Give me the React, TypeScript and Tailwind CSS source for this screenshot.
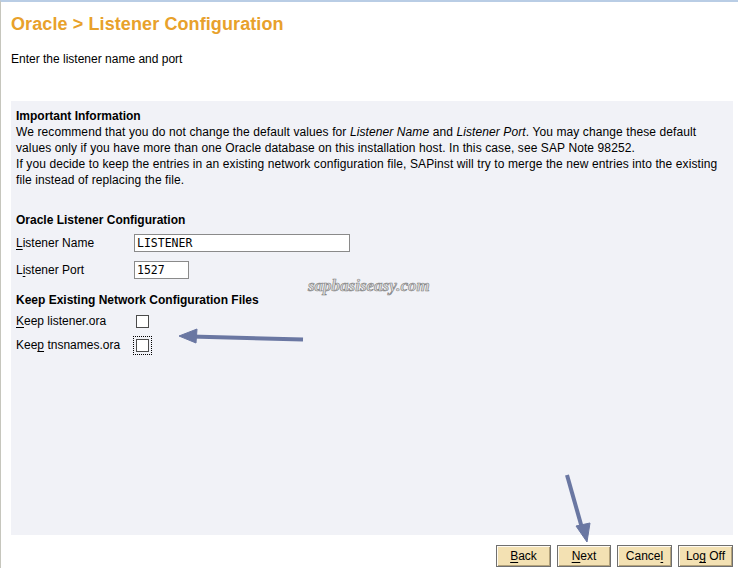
import React from "react";

const Key = ({ text, at }: { text: string; at: number }) => (
  <>
    {text.slice(0, at)}
    <span className="underline underline-offset-2">{text[at]}</span>
    {text.slice(at + 1)}
  </>
);

const SapButton = ({ text, at, w }: { text: string; at: number; w: string }) => (
  <button
    className={`${w} h-[22px] border border-[#6f6f6f] bg-[#f3e1b3] text-[12px] leading-none text-black shadow-[inset_1px_1px_0_#fffaf0,inset_-1px_-1px_0_#b3a27a]`}
  >
    <Key text={text} at={at} />
  </button>
);

const Checkbox = ({ focused }: { focused?: boolean }) => (
  <span
    className={`inline-block h-[13px] w-[13px] border border-[#4b4b4b] bg-white ${
      focused ? "outline outline-1 outline-dotted outline-offset-[2px] outline-black" : ""
    }`}
  />
);

export default function App() {
  return (
    <div className="relative h-[568px] w-[738px] overflow-hidden border-l border-t-2 border-l-[#c6c6bd] border-t-[#b9cde5] bg-white font-['Liberation_Sans',Arial,sans-serif] text-[12px] text-black">
      <div className="pl-[10px] pt-[10px]">
        <h1 className="text-[18px] font-bold leading-[24px] tracking-[0.1px] text-[#e8a12b]">
          Oracle &gt; Listener Configuration
        </h1>
        <p className="mt-[15px] leading-4">Enter the listener name and port</p>
      </div>

      <div className="ml-[10px] mt-[34px] h-[434px] w-[722px] bg-[#f1f2f7] px-[5px] pt-[7px]">
        <div className="whitespace-nowrap leading-4 tracking-[0.1px]">
          <div className="font-bold tracking-normal">Important Information</div>
          <div>
            We recommend that you do not change the default values for <i>Listener Name</i> and{" "}
            <i>Listener Port</i>. You may change these default
          </div>
          <div>
            values only if you have more than one Oracle database on this installation host. In
            this case, see SAP Note 98252.
          </div>
          <div>
            If you decide to keep the entries in an existing network configuration file, SAPinst
            will try to merge the new entries into the existing
          </div>
          <div>file instead of replacing the file.</div>
        </div>

        <div className="mt-[24px] font-bold leading-4">Oracle Listener Configuration</div>
        <div className="mt-[6px] flex h-[18px] items-center">
          <label className="w-[118px]">
            <Key text="Listener Name" at={0} />
          </label>
          <input
            readOnly
            value="LISTENER"
            className="h-[18px] w-[216px] border border-[#8a8a8a] bg-white px-[2px] font-['DejaVu_Sans_Mono',monospace] text-[11.5px] outline-none"
          />
        </div>
        <div className="mt-[9px] flex h-[18px] items-center">
          <label className="w-[118px]">
            <Key text="Listener Port" at={1} />
          </label>
          <input
            readOnly
            value="1527"
            className="h-[18px] w-[55px] border border-[#8a8a8a] bg-white px-[2px] font-['DejaVu_Sans_Mono',monospace] text-[11.5px] outline-none"
          />
        </div>

        <div className="mt-[13px] font-bold leading-4">Keep Existing Network Configuration Files</div>
        <div className="mt-[5px] flex h-4 items-center">
          <label className="w-[120px]">
            <Key text="Keep listener.ora" at={0} />
          </label>
          <Checkbox />
        </div>
        <div className="mt-[8px] flex h-4 items-center">
          <label className="w-[120px]">
            <Key text="Keep tnsnames.ora" at={3} />
          </label>
          <Checkbox focused />
        </div>
      </div>

      <div className="mt-[10px] flex justify-end gap-[6px] pr-[5px]">
        <SapButton text="Back" at={0} w="w-[55px]" />
        <SapButton text="Next" at={0} w="w-[54px]" />
        <SapButton text="Cancel" at={5} w="w-[55px]" />
        <SapButton text="Log Off" at={2} w="w-[55px]" />
      </div>

      {/* watermark */}
      <div className="pointer-events-none absolute left-[307px] top-[271px] font-['Liberation_Serif',serif] text-[17px] font-bold italic text-[#dcdcdc] [-webkit-text-stroke:0.6px_#7d7d7d]">
        sapbasiseasy.com
      </div>

      {/* annotation arrows */}
      <svg className="pointer-events-none absolute left-0 top-0" width="738" height="568">
        <g fill="#6a77a2" stroke="#6a77a2">
          <line x1="302" y1="337.5" x2="190" y2="334.5" strokeWidth="4" />
          <polygon points="178,334 196,327 195,341" />
          <line x1="566" y1="473" x2="581" y2="526" strokeWidth="4" />
          <polygon points="586,540 575,524 589,521" />
        </g>
      </svg>
    </div>
  );
}
